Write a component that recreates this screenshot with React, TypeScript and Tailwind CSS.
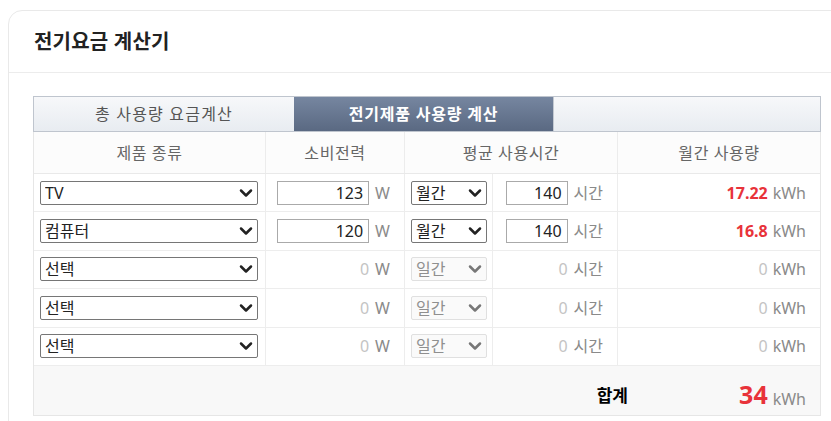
import { useState } from 'react';
import { ChevronDown } from 'lucide-react';

type Row = {
  product: string;
  watt: number;
  period: '월간' | '일간';
  hours: number;
};

const PRODUCTS = ['선택', 'TV', '컴퓨터', '냉장고', '세탁기', '에어컨', '전자레인지'];

const initialRows: Row[] = [
  { product: 'TV', watt: 123, period: '월간', hours: 140 },
  { product: '컴퓨터', watt: 120, period: '월간', hours: 140 },
  { product: '선택', watt: 0, period: '일간', hours: 0 },
  { product: '선택', watt: 0, period: '일간', hours: 0 },
  { product: '선택', watt: 0, period: '일간', hours: 0 },
];

function monthlyKwh(row: Row) {
  if (row.product === '선택') return 0;
  const hours = row.period === '일간' ? row.hours * 30 : row.hours;
  return Math.round(((row.watt * hours) / 1000) * 100) / 100;
}

export default function App() {
  const [rows, setRows] = useState<Row[]>(initialRows);
  const [tab, setTab] = useState(1);

  const update = (i: number, patch: Partial<Row>) => {
    setRows(rows.map((r, idx) => (idx === i ? { ...r, ...patch } : r)));
  };

  const total = Math.round(rows.reduce((sum, r) => sum + monthlyKwh(r), 0));

  return (
    <div
      className="h-[421px] w-[831px] overflow-hidden bg-white pl-[8px] pt-[10px] text-[#222]"
      style={{ fontFamily: '"Noto Sans", "Noto Sans CJK KR", sans-serif' }}
    >
      <div className="h-[460px] w-[860px] rounded-tl-[14px] border border-[#e9e9e9]">
        {/* Header */}
        <div className="flex h-[62px] items-center border-b border-[#ececec] pl-[25px]">
          <h1 className="text-[20px] font-bold leading-none tracking-[0.2px]">전기요금 계산기</h1>
        </div>

        <div className="pl-[24px] pt-[23px]">
          {/* Tabs */}
          <div className="flex h-[36px] w-[788px] border border-[#bfc5ce] bg-gradient-to-b from-[#f7f8fa] to-[#e8ecf1]">
            <button
              onClick={() => setTab(0)}
              className={
                tab === 0
                  ? 'w-[260px] bg-gradient-to-b from-[#7686a0] to-[#5a6982] text-[16px] font-bold tracking-[0.8px] text-white'
                  : 'w-[260px] text-[16px] tracking-[1.2px] text-[#555]'
              }
            >
              총 사용량 요금계산
            </button>
            <button
              onClick={() => setTab(1)}
              className={
                tab === 1
                  ? 'w-[259px] bg-gradient-to-b from-[#7686a0] to-[#5a6982] text-[16px] font-bold tracking-[0.8px] text-white'
                  : 'w-[259px] text-[16px] tracking-[1.2px] text-[#555]'
              }
            >
              전기제품 사용량 계산
            </button>
            <div className="flex-1 border-l border-[#c3c9d1]" />
          </div>

          {/* Table */}
          <div className="w-[788px] border-x border-b border-[#e6e6e6]">
            <div className="grid h-[42px] grid-cols-[232px_139px_213px_1fr] border-b border-[#e9e9e9] bg-[#fcfcfc] text-[16px] tracking-[0.6px] text-[#666]">
              <div className="flex items-center justify-center border-r border-[#ececec]">제품 종류</div>
              <div className="flex items-center justify-center border-r border-[#ececec]">소비전력</div>
              <div className="flex items-center justify-center border-r border-[#ececec]">평균 사용시간</div>
              <div className="flex items-center justify-center">월간 사용량</div>
            </div>

            {rows.map((row, i) => {
              const active = row.product !== '선택';
              const kwh = monthlyKwh(row);
              return (
                <div
                  key={i}
                  className="grid h-[38.4px] grid-cols-[232px_139px_88px_125px_1fr] border-b border-[#ededed] text-[16px]"
                >
                  <div className="flex items-center border-r border-[#ededed] pl-[6px]">
                    <div className="relative">
                      <select
                        value={row.product}
                        onChange={(e) => update(i, { product: e.target.value })}
                        className="h-[24px] w-[218px] appearance-none rounded-[2px] border border-[#767676] bg-white pl-[4px] text-[16px] leading-none text-[#222]"
                      >
                        {PRODUCTS.map((p) => (
                          <option key={p}>{p}</option>
                        ))}
                      </select>
                      <ChevronDown
                        className="pointer-events-none absolute right-[2px] top-[2px] h-[20px] w-[20px] text-[#222]"
                        strokeWidth={3}
                      />
                    </div>
                  </div>

                  <div className="flex items-center justify-end gap-[6px] border-r border-[#ededed] pr-[14px]">
                    {active ? (
                      <input
                        value={row.watt}
                        onChange={(e) => update(i, { watt: Number(e.target.value) || 0 })}
                        className="h-[24px] w-[92px] border border-[#aaa] px-[5px] text-right text-[16px] leading-none text-[#222] outline-none"
                      />
                    ) : (
                      <span className="text-[#c4c4c4]">0</span>
                    )}
                    <span className="text-[#8a8a8a]">W</span>
                  </div>

                  <div className="flex items-center border-r border-[#ededed] pl-[6px]">
                    <div className="relative">
                      <select
                        value={row.period}
                        disabled={!active}
                        onChange={(e) => update(i, { period: e.target.value as Row['period'] })}
                        className={
                          active
                            ? 'h-[24px] w-[76px] appearance-none rounded-[2px] border border-[#767676] bg-white pl-[4px] text-[16px] leading-none text-[#222]'
                            : 'h-[24px] w-[76px] appearance-none rounded-[2px] border border-[#e0e0e0] bg-[#fafafa] pl-[4px] text-[16px] leading-none text-[#8f8f8f]'
                        }
                      >
                        <option>월간</option>
                        <option>일간</option>
                      </select>
                      <ChevronDown
                        className={
                          active
                            ? 'pointer-events-none absolute right-[2px] top-[2px] h-[20px] w-[20px] text-[#222]'
                            : 'pointer-events-none absolute right-[2px] top-[2px] h-[20px] w-[20px] text-[#777]'
                        }
                        strokeWidth={3}
                      />
                    </div>
                  </div>

                  <div className="flex items-center justify-end gap-[6px] border-r border-[#ededed] pr-[14px]">
                    {active ? (
                      <input
                        value={row.hours}
                        onChange={(e) => update(i, { hours: Number(e.target.value) || 0 })}
                        className="h-[24px] w-[62px] border border-[#aaa] px-[5px] text-right text-[16px] leading-none text-[#222] outline-none"
                      />
                    ) : (
                      <span className="text-[#c4c4c4]">0</span>
                    )}
                    <span className="text-[#8a8a8a]">시간</span>
                  </div>

                  <div className="flex items-center justify-end gap-[5px] pr-[14px]">
                    {active ? (
                      <span className="font-bold text-[#e8333a]">{kwh}</span>
                    ) : (
                      <span className="text-[#c4c4c4]">0</span>
                    )}
                    <span className="text-[#8a8a8a]">kWh</span>
                  </div>
                </div>
              );
            })}

            {/* Total */}
            <div className="grid h-[49px] grid-cols-[594px_1fr] bg-[#f8f8f8]">
              <div className="flex items-end justify-end pb-[6px]">
                <span className="text-[17px] font-bold text-black">합계</span>
              </div>
              <div className="flex items-end justify-end gap-[5px] pb-[8px] pr-[14px]">
                <span className="text-[25px] font-bold leading-none text-[#e8333a]">{total}</span>
                <span className="text-[16px] leading-none text-[#8a8a8a]">kWh</span>
              </div>
            </div>
          </div>
        </div>
      </div>
    </div>
  );
}
